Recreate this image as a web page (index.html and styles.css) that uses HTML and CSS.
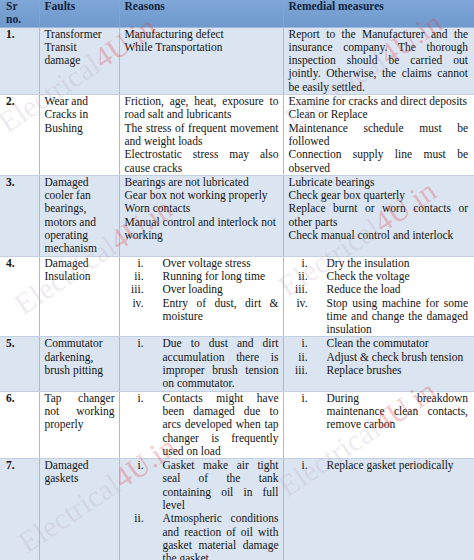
FILE: index.html
```html
<!DOCTYPE html>
<html lang="en">
<head>
<meta charset="utf-8">
<title>Transformer faults</title>
<link rel="stylesheet" href="styles.css">
</head>
<body>
<div class="sheet">
<table class="faults">
  <colgroup>
    <col class="c-sr"><col class="c-fault"><col class="c-reason"><col class="c-remedy">
  </colgroup>
  <thead>
    <tr class="head">
      <th class="sr">Sr no.</th>
      <th>Faults</th>
      <th>Reasons</th>
      <th>Remedial measures</th>
    </tr>
  </thead>
  <tbody>
    <tr class="shade">
      <td class="sr num">1.</td>
      <td>Transformer Transit damage</td>
      <td><p>Manufacturing defect</p><p>While Transportation</p></td>
      <td class="jl"><p>Report to the Manufacturer and the insurance company. The thorough inspection should be carried out jointly. Otherwise, the claims cannot be easily settled.</p></td>
    </tr>
    <tr>
      <td class="sr num">2.</td>
      <td>Wear and Cracks in Bushing</td>
      <td class="jl"><p>Friction, age, heat, exposure to road salt and lubricants</p><p>The stress of frequent movement and weight loads</p><p>Electrostatic stress may also cause cracks</p></td>
      <td class="jl"><p>Examine for cracks and direct deposits</p><p>Clean or Replace</p><p>Maintenance schedule must be followed</p><p>Connection supply line must be observed</p></td>
    </tr>
    <tr class="shade">
      <td class="sr num">3.</td>
      <td>Damaged cooler fan bearings, motors and operating mechanism</td>
      <td><p>Bearings are not lubricated</p><p>Gear box not working properly</p><p>Worn contacts</p><p>Manual control and interlock not working</p></td>
      <td class="jl"><p>Lubricate bearings</p><p>Check gear box quarterly</p><p>Replace burnt or worn contacts or other parts</p><p>Check manual control and interlock</p></td>
    </tr>
    <tr>
      <td class="sr num">4.</td>
      <td>Damaged Insulation</td>
      <td><ol class="roman"><li>Over voltage stress</li><li>Running for long time</li><li>Over loading</li><li>Entry of dust, dirt &amp; moisture</li></ol></td>
      <td><ol class="roman"><li>Dry the insulation</li><li>Check the voltage</li><li>Reduce the load</li><li>Stop using machine for some time and change the damaged insulation</li></ol></td>
    </tr>
    <tr class="shade">
      <td class="sr num">5.</td>
      <td>Commutator darkening, brush pitting</td>
      <td><ol class="roman"><li>Due to dust and dirt accumulation there is improper brush tension on commutator.</li></ol></td>
      <td><ol class="roman"><li>Clean the commutator</li><li>Adjust &amp; check brush tension</li><li>Replace brushes</li></ol></td>
    </tr>
    <tr>
      <td class="sr num">6.</td>
      <td class="jl">Tap changer not working properly</td>
      <td><ol class="roman"><li>Contacts might have been damaged due to arcs developed when tap changer is frequently used on load</li></ol></td>
      <td><ol class="roman"><li>During breakdown maintenance clean contacts, remove carbon</li></ol></td>
    </tr>
    <tr class="shade">
      <td class="sr num">7.</td>
      <td>Damaged gaskets</td>
      <td><ol class="roman"><li>Gasket make air tight seal of the tank containing oil in full level</li><li>Atmospheric conditions and reaction of oil with gasket material damage the gasket</li></ol></td>
      <td><ol class="roman"><li>Replace gasket periodically</li></ol></td>
    </tr>
  </tbody>
</table>

<div class="marks" aria-hidden="true">
  <span class="mark m1">Electrical<b>4U.in</b></span>
  <span class="mark m2">Electrical<b>4U.in</b></span>
  <span class="mark m3">Electrical<b>4U.in</b></span>
  <span class="mark m4">Electrical<b>4U.in</b></span>
  <span class="mark m5">Electrical<b>4U.in</b></span>
  <span class="mark m6">Electrical<b>4U.in</b></span>
</div>
</div>
</body>
</html>
```

FILE: styles.css
```css
html, body {
  margin: 0;
  padding: 0;
  background: #ffffff;
}

.sheet {
  position: relative;
  width: 474px;
  height: 560px;
  overflow: hidden;
}

.faults {
  width: 474px;
  table-layout: fixed;
  border-collapse: collapse;
  font-family: "Liberation Serif", "Times New Roman", serif;
  font-size: 11.5px;
  line-height: 13.3px;
  color: #141414;
}

.c-sr { width: 39px; }
.c-fault { width: 80px; }
.c-reason { width: 164px; }
.c-remedy { width: 191px; }

.faults th,
.faults td {
  vertical-align: top;
  text-align: left;
  padding: 0 4px 0 5px;
  border-left: 1px solid #a9bbd2;
  border-bottom: 1px solid #c3d0e2;
}

.faults th:first-child,
.faults td:first-child {
  border-left: none;
}

.faults td:last-child,
.faults th:last-child {
  padding-right: 6px;
}

.faults .sr {
  padding-left: 6px;
  padding-right: 6px;
}

.head th {
  background: linear-gradient(#7ea6d6, #6f99cd);
  font-weight: bold;
  color: #14243a;
  border-left-color: #7ea6d6;
  border-bottom: 1px solid #9fb8d8;
}

.shade td {
  background: #dbe5f1;
}

.faults td.num {
  font-weight: bold;
}

.faults td.jl,
.faults td.jl p {
  text-align: justify;
}

.faults p {
  margin: 0;
}

.roman {
  margin: 0;
  padding: 0;
  list-style: none;
  counter-reset: item;
}

.roman li {
  counter-increment: item;
  display: grid;
  grid-template-columns: 19px 1fr;
  column-gap: 19px;
  text-align: justify;
}

.roman li::before {
  content: counter(item, lower-roman) ".";
  text-align: right;
}

/* watermark overlay */
.marks {
  position: absolute;
  left: 0;
  top: 0;
  width: 474px;
  height: 560px;
  pointer-events: none;
}

.mark {
  position: absolute;
  white-space: nowrap;
  font-family: "Liberation Serif", "Times New Roman", serif;
  font-size: 30px;
  line-height: 30px;
  color: rgba(185, 160, 195, 0.24);
  transform-origin: left bottom;
  transform: rotate(-34deg);
}

.mark b {
  font-weight: normal;
  color: rgba(225, 60, 70, 0.30);
}

.m1 { left: 10px;  top: 108px; }
.m2 { left: 26px;  top: 290px; }
.m3 { left: 30px;  top: 528px; }
.m4 { left: 296px; top: 104px; }
.m5 { left: 290px; top: 272px; }
.m6 { left: 290px; top: 472px; }
```
